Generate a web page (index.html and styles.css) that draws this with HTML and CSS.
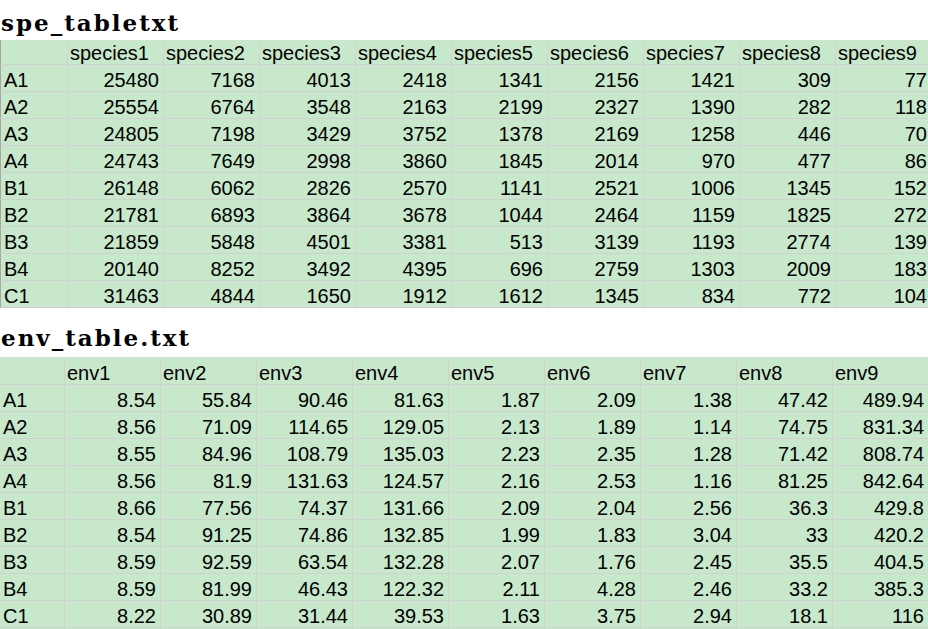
FILE: index.html
```html
<!DOCTYPE html>
<html lang="en">
<head>
<meta charset="utf-8">
<title>spe_tabletxt / env_table.txt</title>
<link rel="stylesheet" href="styles.css">
</head>
<body>
<div class="sheet">
  <h1 class="title title--spe">spe_tabletxt</h1>
  <table class="grid grid--spe">
    <colgroup><col class="c-label"><col><col><col><col><col><col><col><col><col></colgroup>
    <thead>
      <tr class="head"><td class="label"></td><td>species1</td><td>species2</td><td>species3</td><td>species4</td><td>species5</td><td>species6</td><td>species7</td><td>species8</td><td>species9</td></tr>
    </thead>
    <tbody>
      <tr><td class="label">A1</td><td>25480</td><td>7168</td><td>4013</td><td>2418</td><td>1341</td><td>2156</td><td>1421</td><td>309</td><td>77</td></tr>
      <tr><td class="label">A2</td><td>25554</td><td>6764</td><td>3548</td><td>2163</td><td>2199</td><td>2327</td><td>1390</td><td>282</td><td>118</td></tr>
      <tr><td class="label">A3</td><td>24805</td><td>7198</td><td>3429</td><td>3752</td><td>1378</td><td>2169</td><td>1258</td><td>446</td><td>70</td></tr>
      <tr><td class="label">A4</td><td>24743</td><td>7649</td><td>2998</td><td>3860</td><td>1845</td><td>2014</td><td>970</td><td>477</td><td>86</td></tr>
      <tr><td class="label">B1</td><td>26148</td><td>6062</td><td>2826</td><td>2570</td><td>1141</td><td>2521</td><td>1006</td><td>1345</td><td>152</td></tr>
      <tr><td class="label">B2</td><td>21781</td><td>6893</td><td>3864</td><td>3678</td><td>1044</td><td>2464</td><td>1159</td><td>1825</td><td>272</td></tr>
      <tr><td class="label">B3</td><td>21859</td><td>5848</td><td>4501</td><td>3381</td><td>513</td><td>3139</td><td>1193</td><td>2774</td><td>139</td></tr>
      <tr><td class="label">B4</td><td>20140</td><td>8252</td><td>3492</td><td>4395</td><td>696</td><td>2759</td><td>1303</td><td>2009</td><td>183</td></tr>
      <tr><td class="label">C1</td><td>31463</td><td>4844</td><td>1650</td><td>1912</td><td>1612</td><td>1345</td><td>834</td><td>772</td><td>104</td></tr>
    </tbody>
  </table>

  <h1 class="title title--env">env_table.txt</h1>
  <table class="grid grid--env">
    <colgroup><col class="c-label"><col><col><col><col><col><col><col><col><col></colgroup>
    <thead>
      <tr class="head"><td class="label"></td><td>env1</td><td>env2</td><td>env3</td><td>env4</td><td>env5</td><td>env6</td><td>env7</td><td>env8</td><td>env9</td></tr>
    </thead>
    <tbody>
      <tr><td class="label">A1</td><td>8.54</td><td>55.84</td><td>90.46</td><td>81.63</td><td>1.87</td><td>2.09</td><td>1.38</td><td>47.42</td><td>489.94</td></tr>
      <tr><td class="label">A2</td><td>8.56</td><td>71.09</td><td>114.65</td><td>129.05</td><td>2.13</td><td>1.89</td><td>1.14</td><td>74.75</td><td>831.34</td></tr>
      <tr><td class="label">A3</td><td>8.55</td><td>84.96</td><td>108.79</td><td>135.03</td><td>2.23</td><td>2.35</td><td>1.28</td><td>71.42</td><td>808.74</td></tr>
      <tr><td class="label">A4</td><td>8.56</td><td>81.9</td><td>131.63</td><td>124.57</td><td>2.16</td><td>2.53</td><td>1.16</td><td>81.25</td><td>842.64</td></tr>
      <tr><td class="label">B1</td><td>8.66</td><td>77.56</td><td>74.37</td><td>131.66</td><td>2.09</td><td>2.04</td><td>2.56</td><td>36.3</td><td>429.8</td></tr>
      <tr><td class="label">B2</td><td>8.54</td><td>91.25</td><td>74.86</td><td>132.85</td><td>1.99</td><td>1.83</td><td>3.04</td><td>33</td><td>420.2</td></tr>
      <tr><td class="label">B3</td><td>8.59</td><td>92.59</td><td>63.54</td><td>132.28</td><td>2.07</td><td>1.76</td><td>2.45</td><td>35.5</td><td>404.5</td></tr>
      <tr><td class="label">B4</td><td>8.59</td><td>81.99</td><td>46.43</td><td>122.32</td><td>2.11</td><td>4.28</td><td>2.46</td><td>33.2</td><td>385.3</td></tr>
      <tr><td class="label">C1</td><td>8.22</td><td>30.89</td><td>31.44</td><td>39.53</td><td>1.63</td><td>3.75</td><td>2.94</td><td>18.1</td><td>116</td></tr>
      <tr class="blank"><td class="label"></td><td></td><td></td><td></td><td></td><td></td><td></td><td></td><td></td><td></td></tr>
    </tbody>
  </table>
</div>
</body>
</html>
```
FILE: styles.css
```css
html, body {
  margin: 0;
  padding: 0;
  background: #ffffff;
}

body {
  width: 928px;
  height: 629px;
  overflow: hidden;
}

.sheet {
  width: 928px;
  overflow: hidden;
}

.title {
  margin: 0;
  font-family: "DejaVu Serif", "Liberation Serif", serif;
  font-size: 23px;
  font-weight: bold;
  letter-spacing: 2px;
  color: #000;
  line-height: 28px;
  white-space: nowrap;
  padding-left: 1px;
}

.title--spe {
  height: 40px;
  box-sizing: border-box;
  padding-top: 9px;
}

.title--env {
  height: 49px;
  box-sizing: border-box;
  padding-top: 16px;
}

.grid {
  border-collapse: separate;
  border-spacing: 0;
  table-layout: fixed;
  font-family: "Liberation Sans", Arial, sans-serif;
  font-size: 20px;
  color: #000;
  background: #c7e8cb;
}

.grid col {
  width: 96px;
}

.grid--spe {
  width: 932px;
}

.grid--spe col.c-label {
  width: 68px;
}

.grid--env {
  width: 929px;
}

.grid--env col.c-label {
  width: 65px;
}

.grid td {
  box-sizing: border-box;
  height: 27px;
  padding: 4px 4px 0 3px;
  line-height: 22px;
  vertical-align: top;
  text-align: right;
  white-space: nowrap;
  overflow: hidden;
  border-right: 1px solid #d3cfd3;
  border-bottom: 1px solid #d3cfd3;
}

.grid td.label {
  text-align: left;
  padding-left: 3px;
}

.grid .head td {
  text-align: left;
  padding-left: 2px;
}

.grid--spe .head td {
  height: 25px;
  padding-top: 3px;
  line-height: 21px;
}

.grid--env .head td {
  height: 28px;
  padding-top: 5px;
  line-height: 22px;
}

.grid--spe td.label {
  border-left: 1px solid #a6a6a6;
}
```
